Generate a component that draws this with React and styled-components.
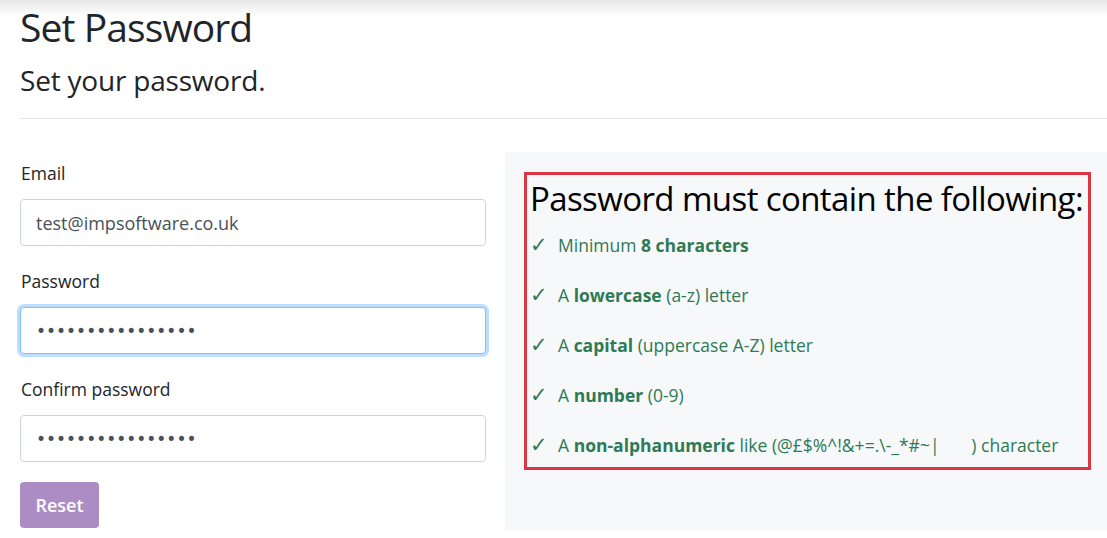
import React, { useEffect, useRef } from "react";
import styled, { createGlobalStyle } from "styled-components";

const Global = createGlobalStyle`
  html, body { margin: 0; padding: 0; overflow: hidden; }
  body {
    font-family: "Open Sans", "Noto Sans", sans-serif;
    color: #212529;
    background: linear-gradient(#e6e6e6, #ffffff 16px) no-repeat, #ffffff;
  }
  * { box-sizing: border-box; }
`;

const Page = styled.div`
  padding: 3px 0 0 20px;
  width: 1110px;
`;

const Title = styled.h1`
  margin: 0;
  font-size: 39px;
  line-height: 48px;
  font-weight: 400;
  letter-spacing: -0.9px;
  color: #212529;
`;

const Subtitle = styled.h4`
  margin: 13px 0 0;
  font-size: 28px;
  line-height: 32px;
  font-weight: 400;
  letter-spacing: -0.2px;
  color: #212529;
`;

const Rule = styled.hr`
  margin: 22px 0 33px;
  border: 0;
  border-top: 1px solid #e3e3e3;
`;

const Row = styled.div`
  display: grid;
  grid-template-columns: 466px 605px;
  column-gap: 19px;
  align-items: start;
`;

const Form = styled.form`
  display: flex;
  flex-direction: column;
  padding-top: 8px;
`;

const Group = styled.div`
  display: flex;
  flex-direction: column;
  margin-bottom: 22px;
`;

const Label = styled.label`
  font-size: 17.5px;
  line-height: 27px;
  margin: 0 0 12px 1px;
  color: #212529;
`;

const Input = styled.input`
  height: 47px;
  width: 466px;
  padding: 0 15px;
  font-family: ${(p) =>
    p.type === "password" ? '"DejaVu Sans", sans-serif' : '"Open Sans", "Noto Sans", sans-serif'};
  font-size: ${(p) => (p.type === "password" ? "17px" : "18px")};
  color: #495057;
  background: #fff;
  border: 1px solid ${(p) => (p.$focused ? "#80bdff" : "#ced4da")};
  border-radius: 4px;
  outline: none;
  box-shadow: ${(p) => (p.$focused ? "0 0 0 3px rgba(0,123,255,.25)" : "none")};
  caret-color: #212529;
`;

const Button = styled.button`
  align-self: flex-start;
  width: 79px;
  height: 46px;
  border: 0;
  border-radius: 4px;
  background: #ab8dc3;
  color: #fff;
  font-family: "Open Sans", "Noto Sans", sans-serif;
  font-size: 18px;
  font-weight: 600;
  margin-top: -2px;
  padding: 0;
`;

const Panel = styled.div`
  background: #f7f8fa;
  padding: 20px 19px 60px;
`;

const RulesBox = styled.div`
  border: 3px solid #dc3545;
  padding: 2px 0 8px 3px;
`;

const RulesTitle = styled.h2`
  margin: 0 0 11px;
  font-size: 33px;
  line-height: 44px;
  font-weight: 400;
  color: #000;
  white-space: nowrap;
  letter-spacing: -0.6px;
`;

const List = styled.ul`
  list-style: none;
  margin: 0;
  padding: 0;
  display: flex;
  flex-direction: column;
  gap: 23px;
`;

const Item = styled.li`
  display: flex;
  align-items: baseline;
  height: 27px;
  font-size: 17.5px;
  line-height: 27px;
  color: #2e7a55;
  white-space: pre;
`;

const Check = styled.span`
  width: 28px;
  flex: none;
  font-family: "DejaVu Sans", sans-serif;
  font-size: 21px;
  line-height: 27px;
  font-weight: 700;
`;

const Strong = styled.b`
  font-weight: 700;
`;

const rules = [
  [<>Minimum </>, <Strong>8 characters</Strong>, null],
  [<>A </>, <Strong>lowercase</Strong>, <> (a-z) letter</>],
  [<>A </>, <Strong>capital</Strong>, <> (uppercase A-Z) letter</>],
  [<>A </>, <Strong>number</Strong>, <> (0-9)</>],
  [<>A </>, <Strong>non-alphanumeric</Strong>, <> like (@£$%^!&+=.\-_*#~|       ) character</>],
];

export default function App() {
  const pw = useRef(null);
  useEffect(() => {
    const el = pw.current;
    if (el) {
      el.focus();
      el.setSelectionRange(el.value.length, el.value.length);
    }
  }, []);
  return (
    <>
      <Global />
      <Page>
        <Title>Set Password</Title>
        <Subtitle>Set your password.</Subtitle>
        <Rule />
        <Row>
          <Form onSubmit={(e) => e.preventDefault()}>
            <Group>
              <Label>Email</Label>
              <Input type="text" defaultValue="test@impsoftware.co.uk" />
            </Group>
            <Group>
              <Label>Password</Label>
              <Input ref={pw} type="password" defaultValue="abcdefghijklmnop" $focused />
            </Group>
            <Group>
              <Label>Confirm password</Label>
              <Input type="password" defaultValue="abcdefghijklmnop" />
            </Group>
            <Button type="button">Reset</Button>
          </Form>
          <Panel>
            <RulesBox>
              <RulesTitle>Password must contain the following:</RulesTitle>
              <List>
                {rules.map((r, i) => (
                  <Item key={i}>
                    <Check>✓</Check>
                    <span>
                      {r[0]}
                      {r[1]}
                      {r[2]}
                    </span>
                  </Item>
                ))}
              </List>
            </RulesBox>
          </Panel>
        </Row>
      </Page>
    </>
  );
}
